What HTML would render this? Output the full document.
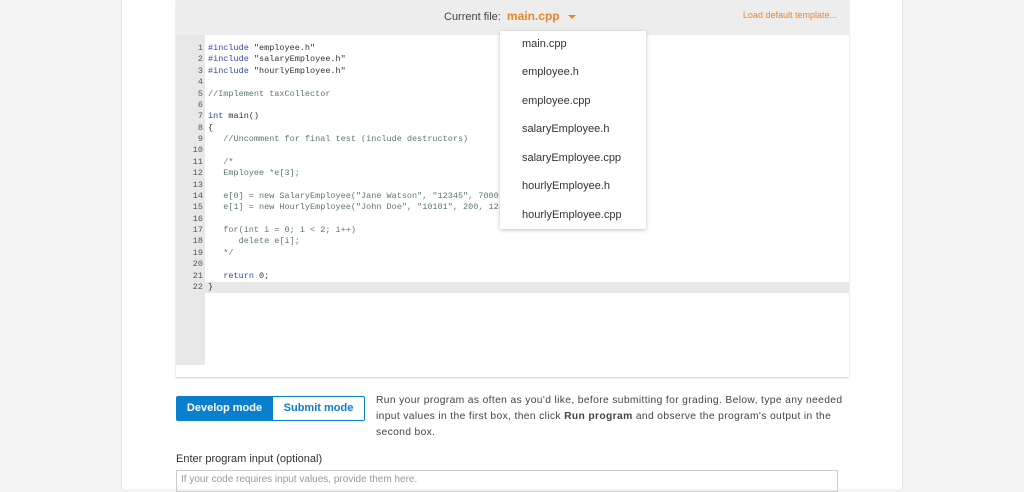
<!DOCTYPE html>
<html><head><style>
*{margin:0;padding:0;box-sizing:border-box}
body{width:1024px;height:489px;background:#f3f3f3;position:relative;overflow:hidden;font-family:"Liberation Sans",sans-serif}
.card{position:absolute;left:121px;top:0;width:782px;height:489px;background:#fff;border-left:1px solid #e4e4e4;border-right:1px solid #e4e4e4}
.ed{position:absolute;left:176px;top:0;width:673px;height:377px;box-shadow:0 1px 2px rgba(0,0,0,.2)}
.bar{position:absolute;left:0;top:0;width:673px;height:35px;background:#ededed}
.cur{position:absolute;left:268px;top:9px;font-size:11px;color:#444}
.cur b{color:#e8862a;font-size:12px;margin-left:3px}
.arr{position:absolute;left:392px;top:15px;border:4px solid transparent;border-top-color:#e8862a;border-bottom:none}
.load{position:absolute;right:12px;top:10px;font-size:9px;color:#e8862a}
.gut{position:absolute;left:0;top:35px;width:29px;height:330px;background:#e8e8e8}
.code{position:absolute;left:0;top:43px;width:673px;font-family:"Liberation Mono",monospace;font-size:8.5px;line-height:11.38px;white-space:pre;color:#333}
.ln{display:block;height:11.38px}
.n{display:inline-block;width:27px;text-align:right;color:#555;margin-right:5px}
.hl{background:#e8e8e8}
.k{color:#3546a8}.c{color:#5a7a6a}.s{color:#2d6a3e}
.dd{position:absolute;left:500px;top:31px;width:146px;height:198px;background:#fff;box-shadow:0 1px 4px rgba(0,0,0,.25);font-size:11px;color:#333}
.dd div{position:absolute;left:22px}
.btn{position:absolute;top:396px;height:25px;font-size:11px;font-weight:bold;line-height:25px;text-align:center}
.p{position:absolute;left:376px;top:393px;width:480px;font-size:10.3px;line-height:16px;color:#444;white-space:nowrap;letter-spacing:0.35px}
.lab{position:absolute;left:176px;top:453px;font-size:11px;color:#333}
.inp{position:absolute;left:176px;top:470px;width:662px;height:22px;border:1px solid #ccc;font-size:10px;color:#999;padding:3px 4px}
</style></head><body>
<div class="card"></div>
<div class="ed">
<div class="bar"><span class="cur">Current file: <b>main.cpp</b></span><span class="arr"></span><span class="load">Load default template...</span></div>
<div class="gut"></div>
<div class="code"><span class="ln"><span class="n">1</span><span class="k">#include</span> "employee.h"</span><span class="ln"><span class="n">2</span><span class="k">#include</span> "salaryEmployee.h"</span><span class="ln"><span class="n">3</span><span class="k">#include</span> "hourlyEmployee.h"</span><span class="ln"><span class="n">4</span></span><span class="ln"><span class="n">5</span><span class="c">//Implement taxCollector</span></span><span class="ln"><span class="n">6</span></span><span class="ln"><span class="n">7</span><span class="k">int</span> main()</span><span class="ln"><span class="n">8</span>{</span><span class="ln"><span class="n">9</span><span class="c">   //Uncomment for final test (include destructors)</span></span><span class="ln"><span class="n">10</span></span><span class="ln"><span class="n">11</span><span class="c">   /*</span></span><span class="ln"><span class="n">12</span><span class="c">   Employee *e[3];</span></span><span class="ln"><span class="n">13</span></span><span class="ln"><span class="n">14</span><span class="c">   e[0] = new SalaryEmployee("Jane Watson", "12345", 7000</span></span><span class="ln"><span class="n">15</span><span class="c">   e[1] = new HourlyEmployee("John Doe", "10101", 200, 12</span></span><span class="ln"><span class="n">16</span></span><span class="ln"><span class="n">17</span><span class="c">   for(int i = 0; i &lt; 2; i++)</span></span><span class="ln"><span class="n">18</span><span class="c">      delete e[i];</span></span><span class="ln"><span class="n">19</span><span class="c">   */</span></span><span class="ln"><span class="n">20</span></span><span class="ln"><span class="n">21</span>   <span class="k">return</span> 0;</span><span class="ln hl"><span class="n">22</span>}</span></div>
</div>
<div class="dd">
<div style="top:7px">main.cpp</div>
<div style="top:35px">employee.h</div>
<div style="top:64px">employee.cpp</div>
<div style="top:92px">salaryEmployee.h</div>
<div style="top:121px">salaryEmployee.cpp</div>
<div style="top:149px">hourlyEmployee.h</div>
<div style="top:178px">hourlyEmployee.cpp</div>
</div>
<div class="btn" style="left:176px;width:97px;background:#0b7fcf;color:#fff;border-radius:2px 0 0 2px">Develop mode</div>
<div class="btn" style="left:272px;width:93px;border:1px solid #0b7fcf;color:#0b7fcf;line-height:23px;border-radius:0 2px 2px 0">Submit mode</div>
<div class="p">Run your program as often as you'd like, before submitting for grading. Below, type any needed<br>input values in the first box, then click <b>Run program</b> and observe the program's output in the<br>second box.</div>
<div class="lab">Enter program input (optional)</div>
<div class="inp">If your code requires input values, provide them here.</div>
</body></html>
